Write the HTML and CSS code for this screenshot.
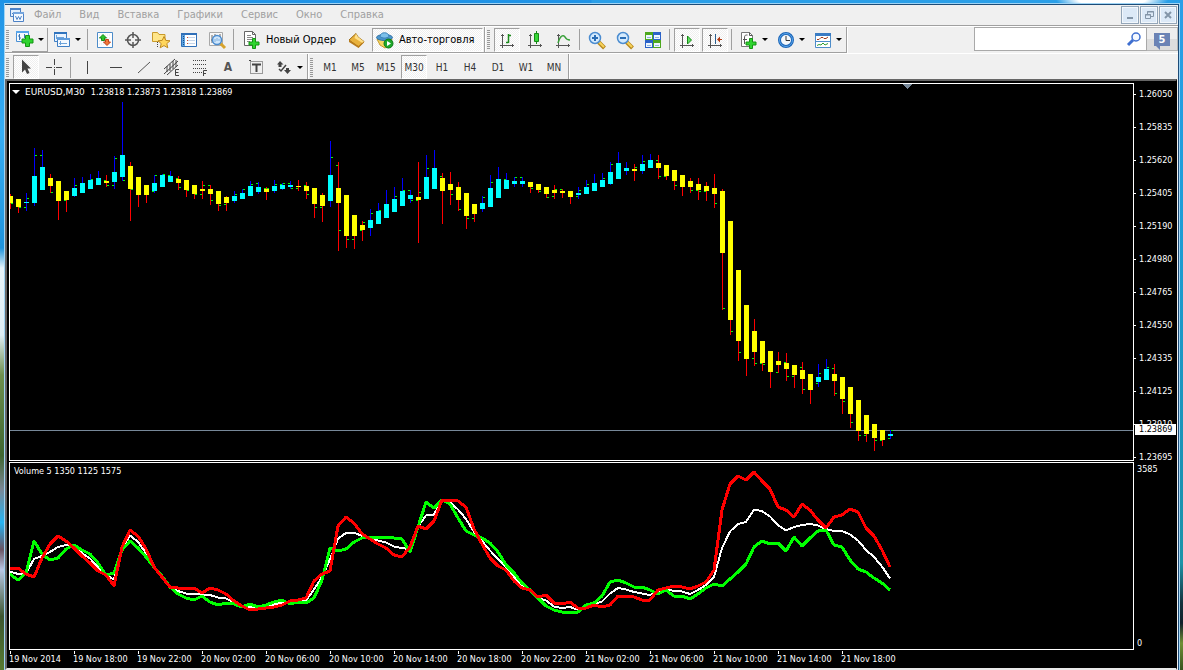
FILE: index.html
```html
<!DOCTYPE html>
<html lang="ru">
<head>
  <meta charset="UTF-8" />
  <meta name="viewport" content="width=device-width, initial-scale=1.0" />
  <title>EURUSD,M30</title>
  <link rel="stylesheet" href="styles.css">
</head>
<body>
  <div class="desktop">
    <div class="window">

      <!-- Menu -->
      <header class="menubar">
        <svg class="logo" width="16" height="16" viewBox="0 0 16 16">
          <path d="M1.5 1.5h10v8h-10z" fill="#e4effc" stroke="#4d82c6"/>
          <path d="M1 2h11" stroke="#4d82c6" stroke-width="2"/>
          <path d="M3 6.5h1.500V5" fill="none" stroke="#4d82c6"/>
          <path d="M4.500 5.500h10v9h-10z" fill="#f4f9ff" stroke="#4d82c6"/>
          <path d="M4 6h11" stroke="#75a5dd" stroke-width="2"/>
          <path d="M6.500 9l1.500 3.500 1.500-3 1.500 3L12.500 9" fill="none" stroke="#4d82c6"/>
        </svg>
        <nav class="menu">
          <a href="#">Файл</a>
          <a href="#">Вид</a>
          <a href="#">Вставка</a>
          <a href="#">Графики</a>
          <a href="#">Сервис</a>
          <a href="#">Окно</a>
          <a href="#">Справка</a>
        </nav>
        <div class="win-buttons">
          <button aria-label="Свернуть"><svg width="12" height="12"><path d="M3 9h6" stroke="#8395a8" stroke-width="2"/></svg></button>
          <button aria-label="Восстановить"><svg width="12" height="12" fill="none" stroke="#8395a8"><path d="M4.500 5V2.500h6v5H8M4 3h7M2.500 5.500h5v4h-5zM2 6h6"/></svg></button>
          <button aria-label="Закрыть"><svg width="12" height="12"><path d="M3 3l6 6M9 3l-6 6" stroke="#8395a8" stroke-width="2"/></svg></button>
        </div>
      </header>

      <!-- Main toolbar -->
      <div class="row">
        <div class="toolbar framed">
          <span class="grip"></span>
          <button class="drop raised" aria-label="Новый график">
            <svg width="20" height="20" viewBox="0 0 20 20">
              <path d="M1.500 2.500h12v10h-12z" fill="#f5faff" stroke="#4a90d4"/><path d="M1 3h13" stroke="#58a6ec" stroke-width="2"/>
              <path d="M4.500 5v6M3 7h1.500M4.500 9H6M9.500 5v4" stroke="#3f77b5"/>
              <path d="M10.500 6.500h4v3.500H18v4h-3.500v3.500h-4V14H7v-4h3.500z" fill="#2fd42f" stroke="#149414"/>
            </svg>
            <span class="arrow"></span>
          </button>
          <button class="drop" aria-label="Профили">
            <svg width="20" height="20" viewBox="0 0 20 20" stroke="#3f7fc4">
              <path d="M2.500 2.500h12v9h-12z" fill="#eaf4ff"/><path d="M2 3h13" stroke="#2f73bd" stroke-width="2"/><path d="M4.500 5v4M4 7.500h8" stroke="#6ba3da"/>
              <path d="M5.500 8.500h12v8h-12z" fill="#f4f9ff"/><path d="M5 9h13" stroke="#5d9bdc" stroke-width="2"/><path d="M7 13.500h8M8.500 11v4" stroke="#6ba3da"/>
            </svg>
            <span class="arrow"></span>
          </button>
          <span class="sep"></span>
          <button aria-label="Обзор рынка">
            <svg width="20" height="20" viewBox="0 0 20 20">
              <path d="M2.500 2.500h15v15h-15z" fill="#fff" stroke="#4d8cc9"/><path d="M4 5h12M4 8h12M4 11h12M4 14h12" stroke="#dce8f4" stroke-dasharray="1 1"/>
              <path d="M8 4.500l3.500 3.500H9.500v2.500h-3V8H4.500z" fill="#2dc52d" stroke="#178a17"/>
              <path d="M12 15.500L8.500 12h2V9.500h3V12h2z" fill="#f2793a" stroke="#c0431a"/>
            </svg>
          </button>
          <button aria-label="Окно данных">
            <svg width="20" height="20" viewBox="0 0 20 20" fill="none" stroke="#555">
              <circle cx="10" cy="10" r="5.500" stroke-width="1.500"/><path d="M10 2v6M10 12v6M2 10h6M12 10h6" stroke-width="1.500"/>
            </svg>
          </button>
          <button aria-label="Навигатор">
            <svg width="20" height="20" viewBox="0 0 20 20">
              <path d="M1.500 11.500v-9h5l1.500 2h6v7z" fill="#ffe68a" stroke="#c99a2b"/>
              <path d="M6.500 12v6" stroke="#444" stroke-dasharray="1 1"/>
              <path d="M13 6.500l1.800 3.900 4.200.4-3.200 2.800 1 4.200-3.800-2.200-3.800 2.200 1-4.200L7 10.800l4.200-.4z" fill="#ffd65c" stroke="#c08a1c"/>
            </svg>
          </button>
          <button aria-label="Терминал">
            <svg width="20" height="20" viewBox="0 0 20 20">
              <path d="M2.500 3.500h15v13h-15z" fill="#fdfeff" stroke="#2f6fb8"/><path d="M2 4h16" stroke="#2f6fb8" stroke-width="2"/>
              <path d="M3 5h3v11H3z" fill="#5ea3e0"/><path d="M4.500 6v9" stroke="#1c4f8a" stroke-dasharray="1 1"/>
              <path d="M8 7.500h8M8 10.500h8M8 13.500h8" stroke="#c4d4e8"/><path d="M8 7.500h1M8 10.500h1M8 13.500h1" stroke="#d24a2a"/>
            </svg>
          </button>
          <button aria-label="Тестер стратегий">
            <svg width="20" height="20" viewBox="0 0 20 20">
              <path d="M2.500 2.500h13v13h-13z" fill="#f7f7f7" stroke="#a8a8a8"/><path d="M5 5v8M4 10h2M8 4v3M13 4v4" stroke="#666"/>
              <path d="M13 13l5 5" stroke="#d8a32c" stroke-width="3"/>
              <circle cx="10" cy="10" r="4.500" fill="#cfe6fb" stroke="#4b8cd0" stroke-width="1.500"/><path d="M8 9v3M10 8v3M12 9v2" stroke="#7eb0e0"/>
            </svg>
          </button>
          <span class="sep"></span>
          <button class="wide order">
            <svg width="20" height="20" viewBox="0 0 20 20">
              <path d="M2.500 1.500h8l3 3v11h-11z" fill="#fff" stroke="#666"/><path d="M10.500 1.500v3h3" fill="none" stroke="#666"/>
              <path d="M5 5.500h4M5 7.500h6M5 9.500h6M5 11.500h3" stroke="#888"/>
              <path d="M10.500 8.500h3V12H17v3h-3.500v3.500h-3V15H7v-3h3.500z" fill="#2fd42f" stroke="#149414"/>
            </svg>
            Новый Ордер
          </button>
          <button aria-label="MetaEditor">
            <svg width="20" height="20" viewBox="0 0 20 20">
              <path d="M2 10l7-6.500 2 3.500 6 4.500-5.500 5.500z" fill="#e8b13c" stroke="#9a6a14"/>
              <path d="M9 3.500l2 3.500 6 4.500-1.500 1.500-8-5z" fill="#ffe08a"/><path d="M2 10v2l9.500 6 5.500-5.500v-1L11.500 16z" fill="#b97c1c"/>
            </svg>
          </button>
          <button class="wide pressed auto" aria-pressed="true">
            <svg width="20" height="20" viewBox="0 0 20 20">
              <path d="M2 9h15l-2 6-5 3-5-3z" fill="#f7d662" stroke="#c59a28"/>
              <ellipse cx="9.500" cy="7.500" rx="8" ry="3" fill="#4b95cc" stroke="#2c6fa6"/><path d="M5 6.500c0-5 9-5 9 0-2 2-7 2-9 0z" fill="#7cc0ea" stroke="#3a82b8"/>
              <circle cx="13.500" cy="13.500" r="4.500" fill="#1fa82a" stroke="#0d7a16"/><path d="M12 11l4 2.500-4 2.500z" fill="#fff"/>
            </svg>
            Авто-торговля
          </button>
          <span class="edge"></span>
          <span class="grip"></span>
          <button class="pressed" aria-label="Бары">
            <svg width="20" height="20" viewBox="0 0 20 20" fill="none" stroke="#555">
              <path d="M5.500 4v14M3 15.500h14M4 5.500h3M15.500 14v3"/><path d="M11.500 4v9M9 12.500h2.500M11.500 5.500H14" stroke="#1c8a1c" stroke-width="1.500"/>
            </svg>
          </button>
          <button aria-label="Свечи">
            <svg width="20" height="20" viewBox="0 0 20 20" fill="none" stroke="#555">
              <path d="M5.500 4v14M3 15.500h14M4 5.500h3M15.500 14v3"/><path d="M11.500 1v13" stroke="#178a17"/><path d="M9.500 3.500h4v8h-4z" fill="#38d838" stroke="#178a17"/>
            </svg>
          </button>
          <button aria-label="Линия">
            <svg width="20" height="20" viewBox="0 0 20 20" fill="none" stroke="#555">
              <path d="M5.500 4v14M3 15.500h14M4 5.500h3M15.500 14v3"/><path d="M5 13c2-7 5-9 7-6 1 2 3 3 5 3" stroke="#3aa03a" stroke-width="1.500"/>
            </svg>
          </button>
          <span class="sep"></span>
          <button aria-label="Увеличить">
            <svg width="20" height="20" viewBox="0 0 20 20">
              <path d="M11.500 12l6 6" stroke="#b98a1e" stroke-width="4"/><path d="M12 12l5 5" stroke="#f7d35c" stroke-width="2"/>
              <circle cx="8" cy="8" r="5.500" fill="#d4eafd" stroke="#4b8cd0" stroke-width="1.500"/><path d="M5 8h6M8 5v6" stroke="#2a6db5" stroke-width="2"/>
            </svg>
          </button>
          <button aria-label="Уменьшить">
            <svg width="20" height="20" viewBox="0 0 20 20">
              <path d="M11.500 12l6 6" stroke="#b98a1e" stroke-width="4"/><path d="M12 12l5 5" stroke="#f7d35c" stroke-width="2"/>
              <circle cx="8" cy="8" r="5.500" fill="#d4eafd" stroke="#4b8cd0" stroke-width="1.500"/><path d="M5 8h6" stroke="#2a6db5" stroke-width="2"/>
            </svg>
          </button>
          <button aria-label="Окна мозаикой">
            <svg width="20" height="20" viewBox="0 0 20 20">
              <path d="M2 2h8v8H2zM10 10h8v8h-8z" fill="#4da81e"/><path d="M10 2h8v8h-8zM2 10h8v8H2z" fill="#2b62c8"/>
              <path d="M3 5h6v4H3zM11 5h6v4h-6zM3 13h6v4H3zM11 13h6v4h-6z" fill="#eef6ff"/>
              <path d="M4 7.500h4M12 7.500h4M4 15.500h4M12 15.500h4" stroke="#8fb5dd"/>
            </svg>
          </button>
          <span class="sep"></span>
          <button class="pressed" aria-label="Автопрокрутка">
            <svg width="20" height="20" viewBox="0 0 20 20" fill="none" stroke="#555">
              <path d="M5.500 4v14M3 15.500h14M4 5.500h3M15.500 14v3"/><path d="M10.500 6l4 4-4 4z" fill="#5fe05f" stroke="#178a17"/>
            </svg>
          </button>
          <button class="pressed" aria-label="Сдвиг графика">
            <svg width="20" height="20" viewBox="0 0 20 20" fill="none" stroke="#555">
              <path d="M5.500 4v14M3 15.500h14M4 5.500h3M15.500 14v3"/><path d="M10.500 4v10" stroke="#2a6090"/><path d="M17 9.500h-4" stroke="#b23a12"/><path d="M15 6.500v6l-3-3z" fill="#b23a12" stroke="none"/>
            </svg>
          </button>
          <span class="sep"></span>
          <button class="drop" aria-label="Индикаторы">
            <svg width="20" height="20" viewBox="0 0 20 20">
              <path d="M2.500 2.500h8l3 3v11h-11z" fill="#fff" stroke="#777"/><path d="M10.500 2.500v3h3M5.500 14V8c0-3 1-3 3-3M4 9.500h4" fill="none" stroke="#555"/>
              <path d="M10.500 8.500h3V12H17v3h-3.500v3.500h-3V15H7v-3h3.500z" fill="#2fd42f" stroke="#149414"/>
            </svg>
            <span class="arrow"></span>
          </button>
          <button class="drop" aria-label="Периоды">
            <svg width="20" height="20" viewBox="0 0 20 20">
              <circle cx="10" cy="10" r="6.500" fill="#f4f8fc" stroke="#1d66b8" stroke-width="3"/><circle cx="10" cy="10" r="6.500" fill="none" stroke="#5aa7ec"/>
              <path d="M10 6v4.500h4" fill="none" stroke="#333"/>
            </svg>
            <span class="arrow"></span>
          </button>
          <button class="drop" aria-label="Шаблоны">
            <svg width="20" height="20" viewBox="0 0 20 20" fill="none">
              <path d="M2.500 3.500h15v14h-15z" fill="#fff" stroke="#4d8cc9"/><path d="M2 4.500h16" stroke="#3a7cc4" stroke-width="3"/><path d="M3 11.500h14" stroke="#4d8cc9"/>
              <path d="M4 9.500h2l2-2h2l1 1h2l2-1.500" stroke="#a03c1c"/><path d="M4 15.500l2-1 2 .5 2-2 2 2 3-1.500" stroke="#2f9c2f"/>
            </svg>
            <span class="arrow"></span>
          </button>
        </div>
        <form class="search">
          <label class="field">
            <input type="text" aria-label="Поиск">
            <svg width="16" height="16" viewBox="0 0 16 16" fill="none"><path d="M7 9l-5 5" stroke="#3f6fd0" stroke-width="3"/><circle cx="10" cy="6" r="4" stroke="#3f6fd0" stroke-width="1.500" fill="#f5f9ff"/></svg>
          </label>
          <button type="button" class="news"><span>5</span></button>
        </form>
      </div>

      <!-- Drawing tools and timeframes -->
      <div class="row">
        <div class="toolbar">
          <span class="grip"></span>
          <button class="pressed" aria-label="Курсор">
            <svg width="20" height="20" viewBox="0 0 20 20"><path d="M6 2.500v13l3-3 2 4.500 2.500-1-2-4.500H15z" fill="#444"/></svg>
          </button>
          <button aria-label="Перекрестие">
            <svg width="20" height="20" viewBox="0 0 20 20"><path d="M10.500 2v6M10.500 12v6M2 10.500h6M12 10.500h6M10 10.500h1" stroke="#444"/></svg>
          </button>
          <span class="sep"></span>
          <button aria-label="Вертикальная линия">
            <svg width="20" height="20" viewBox="0 0 20 20"><path d="M9.500 4v13" stroke="#444"/></svg>
          </button>
          <button aria-label="Горизонтальная линия">
            <svg width="20" height="20" viewBox="0 0 20 20"><path d="M4 10.500h12" stroke="#444"/></svg>
          </button>
          <button aria-label="Трендовая линия">
            <svg width="20" height="20" viewBox="0 0 20 20"><path d="M4 16L16 5" stroke="#555"/></svg>
          </button>
          <button aria-label="Канал">
            <svg width="20" height="20" viewBox="0 0 20 20" fill="none" stroke="#444">
              <path d="M2 12L13 2M2 17L16 4M5 18L16 8M5 9v6M8 7v7M11 4v8M14 3v7"/><path d="M17 12.500h-3.500v6H17M13.500 15.500h3"/>
            </svg>
          </button>
          <button aria-label="Линии Фибоначчи">
            <svg width="20" height="20" viewBox="0 0 20 20" fill="none" stroke="#444">
              <path d="M3 3.500h14M3 7.500h14M3 11.500h14M3 15.500h9" stroke-dasharray="1 1"/><path d="M17 13.500h-3.500V19M13.500 16.500H16"/>
            </svg>
          </button>
          <button class="glyph" aria-label="Текст">A</button>
          <button aria-label="Текстовая метка">
            <svg width="20" height="20" viewBox="0 0 20 20" fill="none" stroke="#444">
              <path d="M4.500 4.500h12v12h-12z" stroke-dasharray="1 1"/><path d="M6 7.500h9M10.500 7v8" stroke-width="2"/><path d="M3 3.500h2"/>
            </svg>
          </button>
          <button class="drop" aria-label="Стрелки">
            <svg width="20" height="20" viewBox="0 0 20 20">
              <path d="M6 4l3.500 3.500H7.500v2.500h-3V7.500H3zM13.500 17L10 13h2v-2h3v2h2z" fill="#444"/><path d="M5 12l2 2 5-6" fill="none" stroke="#444" stroke-width="1.500"/>
            </svg>
            <span class="arrow"></span>
          </button>
          <span class="edge"></span>
          <span class="grip"></span>
          <button class="tf">M1</button>
          <button class="tf">M5</button>
          <button class="tf">M15</button>
          <button class="tf pressed" aria-pressed="true">M30</button>
          <button class="tf">H1</button>
          <button class="tf">H4</button>
          <button class="tf">D1</button>
          <button class="tf">W1</button>
          <button class="tf">MN</button>
          <span class="edge"></span>
        </div>
      </div>

      <!-- Charts -->
      <main class="chart">
        <section class="plot">
          <svg class="canvas" id="price" shape-rendering="crispEdges"></svg>
          <h1 class="caption"><span class="caret"></span><span class="symbol">EURUSD,M30</span>1.23818 1.23873 1.23818 1.23869</h1>
        </section>
        <aside class="axis prices">
          <span>1.26050</span>
          <span>1.25835</span>
          <span>1.25620</span>
          <span>1.25405</span>
          <span>1.25190</span>
          <span>1.24980</span>
          <span>1.24765</span>
          <span>1.24550</span>
          <span>1.24335</span>
          <span>1.24125</span>
          <span>1.23910</span>
          <span>1.23695</span>
          <b class="tag">1.23869</b>
        </aside>
        <section class="plot">
          <svg class="canvas" id="volume" shape-rendering="crispEdges"></svg>
          <h2 class="caption">Volume 5 1350 1125 1575</h2>
        </section>
        <aside class="axis range">
          <span>3585</span>
          <span>0</span>
        </aside>
        <footer class="times">
          <span>19 Nov 2014</span>
          <span>19 Nov 18:00</span>
          <span>19 Nov 22:00</span>
          <span>20 Nov 02:00</span>
          <span>20 Nov 06:00</span>
          <span>20 Nov 10:00</span>
          <span>20 Nov 14:00</span>
          <span>20 Nov 18:00</span>
          <span>20 Nov 22:00</span>
          <span>21 Nov 02:00</span>
          <span>21 Nov 06:00</span>
          <span>21 Nov 10:00</span>
          <span>21 Nov 14:00</span>
          <span>21 Nov 18:00</span>
        </footer>
      </main>
    </div>
  </div>
  <script src="chart.js"></script>
</body>
</html>
```
FILE: styles.css
```css
/* Base */
* { box-sizing: border-box; }
html, body {
  margin: 0; padding: 0;
  height: 100%;
  overflow: hidden;
  font-family: 'DejaVu Sans Condensed', 'DejaVu Sans', sans-serif;
  font-size: 11px;
}
button {
  font: inherit; color: inherit;
  margin: 0; padding: 0;
  background: none; border: 0;
}
svg { display: block; flex: none; }

/* Wallpaper strip visible round the window */
.desktop {
  height: 100vh;
  padding: 3px 3px 0 4px;
  background:
    radial-gradient(ellipse 56px 10px at 94% 0, #fff 60%, transparent) no-repeat,
    linear-gradient(#1f93e6 0, #38aef4 20%, #1f93dc 37%, #e8f4fa 40%, #dfeef5 50%, #6e8f4e 56%, #3f6630 68%, #7b8795 73%, #27b4f2 78%, #6a5462 82%, #b9c8e6 85%, #3d5630 92%, #577a30 100%) left / 50% 100% no-repeat,
    linear-gradient(#2a9fe8 0, #1f9ed8 30%, #1b93b4 70%, #1c94a8 84%, #14323c 90%, #12202a 93%, #6f8f35 96%, #38531f 100%);
}
.window {
  display: flex; flex-direction: column;
  height: 100%;
  padding: 1px 1px 0 0;
  background: #f0f0f0;
  border: 1px solid #9fd4f5;
  border-bottom: 0;
  box-shadow: inset 0 1px #1d4c78, inset -1px 0 #1d4c78;
}

/* Menu */
.menubar {
  display: flex; align-items: center;
  flex: none;
  height: 21px;
  padding: 0 1px 0 4px;
  border-bottom: 1px solid #a0a0a0;
}
.menu {
  display: flex; flex: 1;
  gap: 18px;
  padding-left: 9px;
}
.menu a {
  color: #a0a0a0;
  text-decoration: none;
  line-height: 18px;
}
.win-buttons { display: flex; gap: 1px; }
.win-buttons button {
  display: grid; place-items: center;
  width: 18px; height: 18px;
  background: #dce9f7;
  border: 1px solid #93a5b8;
  box-shadow: inset 0 0 0 1px #f2f7fc;
}

/* Toolbars */
.row {
  display: flex; flex: none;
  justify-content: space-between;
  align-items: flex-start;
  height: 27px;
  border-top: 1px solid #fff;
}
.row + .row { height: 26px; }
.toolbar {
  display: flex; align-items: center;
  height: 26px;
}
.toolbar.framed {
  border-right: 1px solid #a0a0a0;
  border-bottom: 1px solid #a0a0a0;
  box-shadow: 1px 1px #fff;
}
.toolbar button {
  display: flex; align-items: center; justify-content: center;
  width: 26px; height: 24px;
  margin: 0 1px;
}
.toolbar .drop {
  width: 37px;
  margin: 0;
  gap: 3px;
}
.toolbar .raised {
  width: 36px;
  border-right: 1px solid #a0a0a0;
  border-bottom: 1px solid #a0a0a0;
}
.toolbar .wide {
  justify-content: flex-start;
  gap: 4px;
  white-space: nowrap;
}
.toolbar .pressed {
  border: 1px solid #fff;
  border-top-color: #a0a0a0;
  border-left-color: #a0a0a0;
  background: repeating-conic-gradient(#fff 0 25%, #efefef 0 50%) 0 0 / 2px 2px;
}
.toolbar .order { width: 104px; padding-left: 4px; }
.toolbar .auto { width: 111px; padding-left: 2px; }
.grip {
  width: 3px; height: 19px;
  margin: 0 3px 0 1px;
  background: repeating-linear-gradient(#999 0 1px, #f0f0f0 1px 2px);
}
.sep {
  width: 1px; height: 21px;
  margin: 0 3px 0 2px;
  background: #a0a0a0;
}
.edge {
  width: 2px; height: 100%;
  border-left: 1px solid #a0a0a0;
  border-right: 1px solid #fff;
}
.arrow {
  border: 3px solid transparent;
  border-top-color: #000;
  border-bottom: 0;
}
.toolbar .glyph { font-weight: bold; font-size: 12px; color: #555; }
.toolbar .tf { font-size: 10px; color: #333; }

/* Search */
.search { display: flex; height: 24px; }
.field {
  display: flex; align-items: center;
  width: 173px;
  padding-right: 4px;
  background: #fff;
  border: 1px solid #a9a9a9;
}
.field input {
  flex: 1;
  min-width: 0;
  border: 0; outline: 0;
  background: none;
}
.search .news {
  display: grid; place-items: center;
  width: 31px;
  border: 1px solid #b4b4b4;
  border-left: 0;
  background: linear-gradient(#eee 50%, #ddd 50%);
}
.news span {
  position: relative;
  width: 16px; height: 13px;
  background: #6b83b5;
  color: #fff;
  font-weight: bold; line-height: 13px;
}
/* Bubble tail */
.news span::after {
  content: '';
  position: absolute; left: 2px; top: 100%;
  border-top: 4px solid #6b83b5;
  border-left: 4px solid transparent;
}

/* Chart window */
.chart {
  flex: 1;
  min-height: 0;
  display: grid;
  grid-template-columns: minmax(0, 1fr) 42px;
  grid-template-rows: minmax(0, 1fr) 188px 17px;
  row-gap: 1px;
  margin-right: 1px;
  padding: 2px 0 0 2px;
  background: #000;
  color: #fff;
  font-size: 9px;
  border-top: 2px solid #666;
  border-left: 2px solid #666;
  border-bottom: 2px solid #e8e8e8;
  border-right: 1px solid #000;
}
.plot {
  position: relative;
  border: 1px solid #fff;
}
.canvas { width: 100%; height: 100%; }
.caption {
  position: absolute; left: 4px; top: 2px;
  display: flex; align-items: center;
  margin: 0;
  font-size: 9px; font-weight: normal; line-height: 12px;
}
.caret {
  margin: 0 5px 0 -2px;
  border: 4px solid transparent;
  border-top-color: #fff;
  border-bottom: 0;
}
.symbol {
  margin-right: 6px;
  font-family: 'DejaVu Sans', sans-serif;
}
.axis {
  position: relative;
  display: flex; flex-direction: column;
  line-height: 12px;
}
.prices { gap: 21px; padding-top: 5px; }
.prices span { display: flex; align-items: center; gap: 3px; }
.prices span::before {
  content: '';
  width: 2px; height: 1px;
  background: #fff;
}
/* Current bid */
.tag {
  position: absolute; left: 1px; right: 0; top: 341px;
  padding-left: 4px;
  background: #fff; color: #000;
  font-weight: normal; line-height: 11px;
}
.range { justify-content: space-between; padding: 1px 3px; }
.times {
  grid-column: 1 / -1;
  display: flex;
  line-height: 10px;
}
.times span {
  flex: none;
  width: 64px;
  white-space: nowrap;
}
.times span::before {
  content: '';
  display: block;
  width: 1px; height: 3px;
  margin-left: 1px;
  background: #fff;
}
```
FILE: chart.js
```js
const NS = 'http://www.w3.org/2000/svg';
const STEP = 8;

// type, high, body top, body bottom, low, left tick, right tick (0 = none)
const bars = [
  ['d',194,196,203,209,0,203],['d',199,199,207,213,0,207],['u',193,202,203,211,207,198],['u',148,176,203,206,0,155],
  ['u',150,167,190,190,155,0],['d',174,178,186,193,0,192],['d',181,181,201,220,0,0],['d',191,191,200,212,200,0],
  ['u',178,188,196,197,0,185],['u',177,183,193,193,0,0],['u',174,180,189,189,0,179],['u',171,178,185,185,0,0],
  ['d',175,181,183,187,180,185],['u',156,172,182,189,185,158],['u',102,155,177,181,0,180],['d',162,166,189,221,0,189],
  ['d',177,177,195,207,0,0],['d',185,185,195,203,0,0],['u',175,183,191,193,191,175],['u',174,175,187,187,0,174],
  ['u',171,176,182,182,175,0],['d',176,179,183,190,178,187],['d',180,180,190,197,0,190],['d',185,185,194,199,0,194],
  ['d',181,189,191,199,194,185],['d',185,189,194,205,185,200],['d',191,191,204,211,0,205],['d',196,197,203,211,204,0],
  ['u',191,196,201,203,0,194],['u',189,193,199,199,0,189],['u',181,186,196,196,0,184],['u',182,187,192,194,183,0],
  ['d',187,189,192,200,188,188],['u',180,186,191,193,0,184],['u',183,185,189,190,184,183],['u',181,185,187,189,183,188],
  ['d',180,186,187,191,188,0],['d',182,186,191,199,185,194],['d',188,188,204,218,0,207],['d',193,195,206,222,207,0],
  ['u',141,175,201,207,0,157],['d',162,188,203,251,165,230],['d',195,195,236,248,0,239],['d',215,215,236,249,239,0],
  ['d',221,225,230,241,230,222],['u',209,220,228,236,0,213],['u',203,211,224,224,0,210],['u',190,204,218,218,0,0],
  ['u',187,199,212,212,0,196],['u',178,191,206,206,0,190],['u',190,195,199,203,190,200],['d',162,197,200,243,200,192],
  ['u',155,177,199,199,0,168],['u',150,168,189,189,0,0],['d',173,178,191,224,176,0],['d',172,184,190,205,0,194],
  ['d',182,187,200,211,0,209],['d',193,193,216,229,0,218],['d',204,204,214,222,218,0],['u',196,203,209,212,0,197],
  ['u',175,188,207,207,0,182],['u',167,179,198,198,0,0],['u',173,180,189,189,179,0],['u',177,181,184,187,0,177],
  ['u',177,181,184,187,177,0],['d',182,182,187,193,0,188],['d',184,184,190,193,0,191],['d',187,187,194,198,0,197],
  ['d',185,190,193,199,196,189],['d',189,191,193,198,189,0],['d',191,191,197,204,0,0],['u',187,193,195,199,196,190],
  ['u',180,187,194,194,0,184],['u',174,183,191,191,0,0],['u',173,180,187,187,0,178],['u',162,172,184,185,0,164],
  ['u',152,163,179,179,0,0],['u',162,168,171,175,0,0],['d',164,169,171,181,0,167],['u',155,164,171,174,0,161],
  ['u',154,160,168,168,0,0],['d',155,163,168,179,160,176],['d',165,165,176,180,176,0],['d',170,170,181,190,0,185],
  ['d',175,175,187,196,0,0],['d',178,181,187,193,0,190],['d',178,184,190,200,190,191],['d',182,186,191,201,191,0],
  ['d',174,188,194,208,0,203],['d',189,191,253,310,0,308],['d',221,221,320,335,0,331],['d',270,270,341,361,0,352],
  ['d',305,305,359,376,0,0],['d',319,331,352,366,358,363],['d',341,341,363,371,363,364],['d',351,351,372,388,0,0],
  ['d',352,361,365,373,372,0],['d',353,363,369,381,362,376],['d',365,365,375,388,376,0],['d',362,370,379,394,367,389],
  ['d',374,374,390,404,0,0],['u',364,377,382,387,383,373],['u',359,369,380,380,0,367],['d',364,374,381,396,368,393],
  ['d',377,377,399,414,0,401],['d',387,387,414,428,0,422],['d',400,400,431,441,0,435],['d',415,415,434,442,435,0],
  ['d',424,424,438,451,0,440],['d',430,430,440,446,440,0],['u',430,434,436,439,438,430]
];

const red = [569,568,574,577,558,544,536,541,548,556,563,571,575,586,547,530,536,549,567,577,587,588,589,588,593,588,590,594,601,606,
  610,609,608,607,605,601,600,598,581,574,571,526,517,523,534,539,544,548,555,557,547,526,529,521,500,500,501,507,529,544,
  558,566,570,581,588,590,597,595,603,604,602,608,608,605,607,605,596,596,597,600,600,590,588,586,587,589,586,582,570,510,
  484,476,480,472,481,489,507,510,517,504,510,520,528,517,515,509,512,528,536,550,567];

const green = [574,580,573,541,554,560,558,549,545,550,554,563,575,573,550,541,548,557,567,576,587,594,598,600,596,602,605,603,604,607,
  604,607,605,602,600,604,602,603,598,580,548,551,549,542,538,537,537,537,538,539,552,527,502,508,500,504,518,531,535,538,
  543,552,565,573,583,590,598,606,610,612,612,612,605,603,596,582,580,583,587,587,590,594,590,596,596,599,594,588,584,586,
  579,572,564,547,541,544,543,551,537,546,538,531,530,545,547,560,569,572,578,583,590];

function add(parent, tag, attrs) {
  const el = document.createElementNS(NS, tag);
  for (const k in attrs) el.setAttribute(k, attrs[k]);
  parent.appendChild(el);
  return el;
}
function rect(parent, x, y, width, height, fill) {
  if (height > 0) add(parent, 'rect', { x, y, width, height, fill });
}

// Price chart
const price = document.getElementById('price');
const TOP = 84;
rect(price, 0, 430 - TOP, '100%', 1, '#778899');
add(price, 'path', { d: 'M892 0h10l-5 5z', fill: '#778899' });
bars.forEach(([type, high, top, bottom, low, left, right], i) => {
  const x = i * STEP;
  const up = type === 'u';
  rect(price, x, high - TOP, 1, low - high, up ? '#0000ff' : '#ff0000');
  if (left) rect(price, x - 2, left - TOP, 2, 1, '#00ff00');
  if (right) rect(price, x + 1, right - TOP, 2, 1, '#00ff00');
  rect(price, x - 2, top - TOP, 5, bottom - top, up ? '#00ffff' : '#ffff00');
});

// Volume lines, the white one is the mean of the other two
const volume = document.getElementById('volume');
const BASE = 463;
function line(values, stroke, width) {
  const points = values.map((v, i) => `${i * STEP},${v - BASE}`).join(' ');
  add(volume, 'polyline', { points, stroke, fill: 'none', 'stroke-width': width, 'stroke-linejoin': 'round' });
}
line(red.map((v, i) => (v + green[i]) / 2), '#ffffff', 2);
line(green, '#00ff00', 3);
line(red, '#ff0000', 3);
```
